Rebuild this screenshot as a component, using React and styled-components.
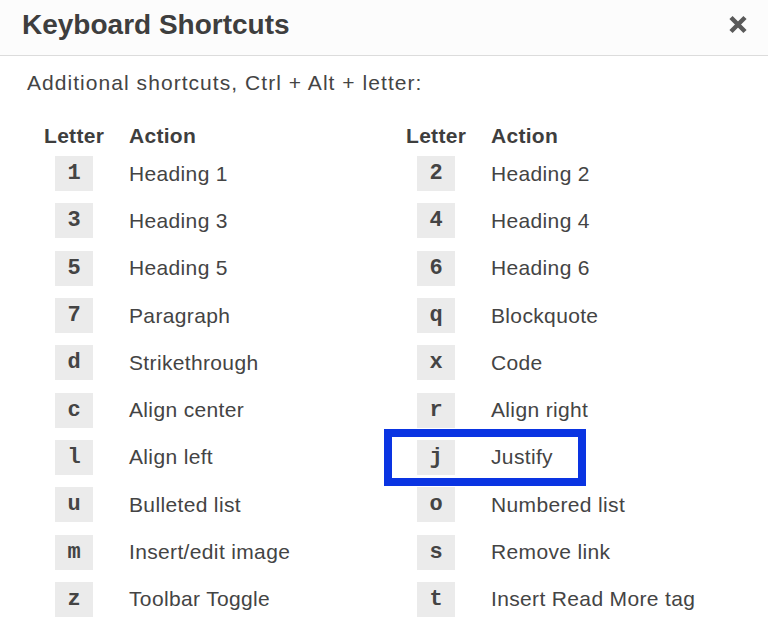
import React from "react";
import styled, { createGlobalStyle } from "styled-components";

const Global = createGlobalStyle`
  html, body { margin: 0; padding: 0; background: #fff; }
  body { font-family: "Liberation Sans", Arial, sans-serif; color: #444; }
`;

const Dialog = styled.div`
  width: 768px;
  height: 628px;
  background: #fff;
  overflow: hidden;
`;

const Header = styled.div`
  height: 56px;
  box-sizing: border-box;
  padding: 0 20px 6px 22px;
  display: flex;
  align-items: center;
  justify-content: space-between;
  background: #fcfcfc;
  border-bottom: 1px solid #dcdcdc;
`;

const Title = styled.h1`
  margin: 0;
  font-size: 28px;
  font-weight: 700;
  line-height: 32px;
  color: #3e3e3e;
`;

const Close = styled.button`
  border: 0;
  background: none;
  padding: 0;
  width: 20px;
  height: 20px;
  display: flex;
  align-items: center;
  justify-content: center;
  cursor: pointer;
`;

const Body = styled.div`
  padding: 15px 0 0 27px;
`;

const Intro = styled.p`
  margin: 0;
  font-size: 21px;
  line-height: 24px;
  letter-spacing: 1.05px;
  color: #444;
`;

const Tables = styled.div`
  display: grid;
  grid-template-columns: 362px 362px;
  margin: 27px 0 0 44px;
`;

const Table = styled.div`
  display: flex;
  flex-direction: column;
`;

const Row = styled.div`
  position: relative;
  display: grid;
  grid-template-columns: 60px auto;
  column-gap: 25px;
  align-items: center;
  height: ${(p) => (p.$head ? "28px" : "47.3px")};
`;

const HeadCell = styled.div`
  font-size: 21px;
  font-weight: 700;
  line-height: 24px;
  letter-spacing: 0.3px;
  color: #3e3e3e;
`;

const KeyCell = styled.div`
  display: flex;
  justify-content: center;
`;

const Kbd = styled.kbd`
  display: flex;
  align-items: center;
  justify-content: center;
  width: 38px;
  height: 35px;
  background: #ebebeb;
  font-family: "Liberation Mono", "Courier New", monospace;
  font-weight: 700;
  font-size: 22px;
  color: #444;
`;

const Action = styled.div`
  font-size: 21px;
  line-height: 24px;
  letter-spacing: 0.35px;
  color: #444;
  white-space: nowrap;
`;

const Highlight = styled.div`
  position: absolute;
  left: -22px;
  top: -5px;
  width: 202px;
  bottom: -5px;
  box-sizing: border-box;
  border: 8px solid #0a34e2;
  pointer-events: none;
`;

const left = [
  ["1", "Heading 1"],
  ["3", "Heading 3"],
  ["5", "Heading 5"],
  ["7", "Paragraph"],
  ["d", "Strikethrough"],
  ["c", "Align center"],
  ["l", "Align left"],
  ["u", "Bulleted list"],
  ["m", "Insert/edit image"],
  ["z", "Toolbar Toggle"],
];

const right = [
  ["2", "Heading 2"],
  ["4", "Heading 4"],
  ["6", "Heading 6"],
  ["q", "Blockquote"],
  ["x", "Code"],
  ["r", "Align right"],
  ["j", "Justify"],
  ["o", "Numbered list"],
  ["s", "Remove link"],
  ["t", "Insert Read More tag"],
];

function ShortcutTable({ rows, highlight }) {
  return (
    <Table>
      <Row $head>
        <HeadCell>Letter</HeadCell>
        <HeadCell>Action</HeadCell>
      </Row>
      {rows.map(([k, a]) => (
        <Row key={k}>
          <KeyCell>
            <Kbd>{k}</Kbd>
          </KeyCell>
          <Action>{a}</Action>
          {highlight === k && <Highlight />}
        </Row>
      ))}
    </Table>
  );
}

export default function App() {
  return (
    <>
      <Global />
      <Dialog>
        <Header>
          <Title>Keyboard Shortcuts</Title>
          <Close aria-label="Close">
            <svg width="20" height="19" viewBox="0 0 20 19">
              <path d="M3 2.5 L17 16.5 M17 2.5 L3 16.5" stroke="#5a5a5a" strokeWidth="4.5" strokeLinecap="butt" />
            </svg>
          </Close>
        </Header>
        <Body>
          <Intro>Additional shortcuts, Ctrl + Alt + letter:</Intro>
        </Body>
        <Tables>
          <ShortcutTable rows={left} />
          <ShortcutTable rows={right} highlight="j" />
        </Tables>
      </Dialog>
    </>
  );
}
